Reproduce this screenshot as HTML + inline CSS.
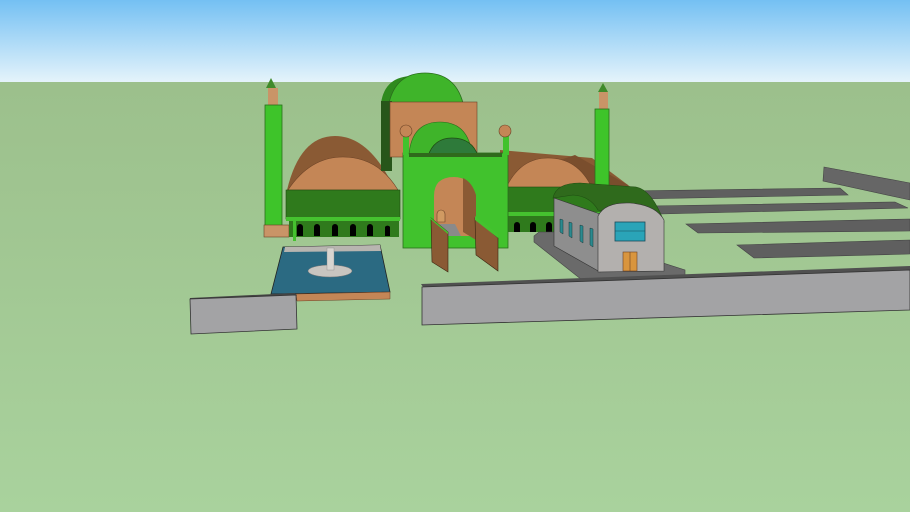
<!DOCTYPE html>
<html><head><meta charset="utf-8"><style>
html,body{margin:0;padding:0;width:910px;height:512px;overflow:hidden}
svg{display:block}
</style></head><body>
<svg width="910" height="512" viewBox="0 0 910 512" xmlns="http://www.w3.org/2000/svg">
<defs>
<linearGradient id="sky" x1="0" y1="0" x2="0" y2="1"><stop offset="0" stop-color="#74c0f3"/><stop offset="1" stop-color="#e6f4fb"/></linearGradient>
<linearGradient id="gr" x1="0" y1="0" x2="0" y2="1"><stop offset="0" stop-color="#9cc08c"/><stop offset="1" stop-color="#a9d29d"/></linearGradient>
</defs>
<rect x="0" y="0" width="910" height="83" fill="url(#sky)"/>
<rect x="0" y="82" width="910" height="430" fill="url(#gr)"/>

<!-- parking strips -->
<g fill="#5f5f5f" stroke="#444" stroke-width="0.6">
<polygon points="628,191 840,188 848,195 636,199"/>
<polygon points="650,206 895,202 908,208 660,214"/>
<polygon points="686,224 910,219 910,231 698,233"/>
<polygon points="737,245 910,240 910,254 754,258"/>
</g>
<polygon points="824,167 910,183 910,200 823,181" fill="#666" stroke="#444" stroke-width="0.6"/>

<!-- brown back roofs -->
<path d="M287,190 Q300,136 335,136 Q370,136 395,190 Z" fill="#8a5a34"/>
<polygon points="500,150 592,158 632,188 632,198 560,198 500,180" fill="#8a5a34"/>
<polygon points="560,160 575,155 628,185 630,198 560,198" fill="#7a4e2d"/>

<!-- left minaret -->
<polygon points="266,88 271,78 276,88" fill="#3f8a2a"/>
<rect x="268" y="88" width="10" height="18" fill="#c99467"/>
<rect x="265" y="105" width="17" height="122" fill="#3ec42a" stroke="#2a6e1c" stroke-width="0.8"/>
<rect x="264" y="225" width="25" height="12" fill="#c99467" stroke="#6b4226" stroke-width="0.6"/>

<!-- left wing -->
<path d="M288,190 Q310,157 343,157 Q378,157 398,190 Z" fill="#c48656" stroke="#6b4226" stroke-width="0.6"/>
<rect x="286" y="190" width="114" height="29" fill="#2f7a1c" stroke="#1f4d12" stroke-width="0.6"/>
<rect x="286" y="217" width="114" height="4" fill="#45c22f"/>
<rect x="289" y="221" width="110" height="16" fill="#2f7a1c"/>
<g fill="#000">
<path d="M297,236 v-9 a3,3 0 0 1 6,0 v9z"/><path d="M314,236 v-9 a3,3 0 0 1 6,0 v9z"/><path d="M332,236 v-9 a3,3 0 0 1 6,0 v9z"/><path d="M350,236 v-9 a3,3 0 0 1 6,0 v9z"/><path d="M367,236 v-9 a3,3 0 0 1 6,0 v9z"/><path d="M385,236 v-9 a3,3 0 0 1 5,0 v9z"/>
</g>
<rect x="293" y="221" width="3" height="20" fill="#45c22f"/>

<!-- right wing -->
<path d="M506,188 Q520,158 548,158 Q578,158 592,188 Z" fill="#c48656" stroke="#6b4226" stroke-width="0.6"/>
<rect x="506" y="187" width="96" height="27" fill="#2f7a1c" stroke="#1f4d12" stroke-width="0.6"/>
<rect x="506" y="212" width="96" height="4" fill="#45c22f"/>
<rect x="506" y="216" width="50" height="16" fill="#2f7a1c"/>
<g fill="#000"><path d="M514,232 v-7 a3,3 0 0 1 6,0 v7z"/><path d="M530,232 v-7 a3,3 0 0 1 6,0 v7z"/><path d="M546,232 v-7 a3,3 0 0 1 6,0 v7z"/></g>
<polygon points="600,188 630,188 630,198 600,198" fill="#c99467"/>

<!-- right minaret -->
<polygon points="598,92 603,83 608,92" fill="#3f8a2a"/>
<rect x="599" y="92" width="9" height="18" fill="#c99467"/>
<rect x="595" y="109" width="14" height="80" fill="#3ec42a" stroke="#2a6e1c" stroke-width="0.8"/>

<!-- central tower -->
<path d="M381,103 Q385,76 413,76 L420,103 Z" fill="#2f8a1e"/>
<path d="M389,103 Q396,73 425,73 Q455,73 463,103 Z" fill="#3fb42a" stroke="#2a6e1c" stroke-width="0.8"/>
<rect x="381" y="101" width="11" height="70" fill="#27561a"/>
<rect x="390" y="102" width="87" height="55" fill="#c48656" stroke="#6b4226" stroke-width="0.6"/>

<!-- portal -->
<rect x="403" y="153" width="105" height="95" fill="#41c22d" stroke="#2a6e1c" stroke-width="0.8"/>
<rect x="403" y="135" width="6" height="20" fill="#41c22d"/>
<rect x="503" y="135" width="6" height="20" fill="#41c22d"/>
<circle cx="406" cy="131" r="6" fill="#c48656" stroke="#6b4226" stroke-width="0.6"/>
<circle cx="505" cy="131" r="6" fill="#c48656" stroke="#6b4226" stroke-width="0.6"/>
<path d="M409,154 Q412,122 440,122 Q468,122 472,154 Z" fill="#3fb42a" stroke="#2a6e1c" stroke-width="0.6"/>
<path d="M428,156 Q434,138 452,138 Q472,138 478,156 Z" fill="#2e7a3a" stroke="#1f4d12" stroke-width="0.8"/>
<rect x="409" y="153" width="93" height="4" fill="#2f6a1c"/>
<path d="M434,236 V196 Q434,177 454,177 Q470,177 475,195 V236 Z" fill="#c48656"/>
<path d="M463,178 Q472,182 476,195 V240 L463,232 Z" fill="#8a5a34"/>
<path d="M437,222 v-8 a4,4 0 0 1 8,0 v8z" fill="#d09a62" stroke="#6b4226" stroke-width="0.6"/>
<polygon points="440,224 455,224 461,236 442,236" fill="#8a8a8a"/>

<!-- front walls -->
<polygon points="431,218 448,232 448,272 432,262" fill="#8a5a34" stroke="#3a2410" stroke-width="0.6"/>
<polygon points="429,218 431,218 448,232 448,234" fill="#45c22f"/>
<polygon points="475,218 498,238 498,271 476,255" fill="#8a5a34" stroke="#3a2410" stroke-width="0.6"/>
<polygon points="475,216 498,234 498,238 475,220" fill="#45c22f"/>

<!-- building platform -->
<polygon points="539,232 566,232 685,270 685,278 582,280 534,242 534,236" fill="#6a6a6a" stroke="#444" stroke-width="0.6"/>
<!-- side -->
<polygon points="554,198 600,214 600,272 554,246" fill="#8e8e8e" stroke="#333" stroke-width="0.6"/>
<!-- roof -->
<path d="M553,198 Q556,183 580,183 L636,187 Q652,190 664,222 L598,210 Q590,196 573,195 Z" fill="#2f6a1c" stroke="#1f4d12" stroke-width="0.6"/>
<path d="M598,272 V216 Q605,202 630,203 Q656,205 664,220 V271 Z" fill="#b3b0ae" stroke="#333" stroke-width="0.6"/>
<rect x="615" y="222" width="30" height="19" fill="#2aa4b8" stroke="#1a4a5a" stroke-width="0.8"/>
<line x1="615" y1="231" x2="645" y2="231" stroke="#1a4a5a" stroke-width="0.6"/>
<rect x="623" y="252" width="14" height="19" fill="#d9953e" stroke="#6b4226" stroke-width="0.6"/>
<line x1="630" y1="252" x2="630" y2="271" stroke="#6b4226" stroke-width="0.6"/>
<g fill="#2a8a90" stroke="#1a3a3a" stroke-width="0.5">
<polygon points="560,219 563,220 563,234 560,232"/><polygon points="569,222 572,223 572,238 569,236"/><polygon points="580,225 583,226 583,243 580,241"/><polygon points="590,228 593,229 593,247 590,245"/>
</g>

<!-- fountain -->
<polygon points="283,247 380,245 390,292 271,294" fill="#2b6a82" stroke="#222" stroke-width="0.8"/>
<polygon points="285,247 380,245 381,251 284,252" fill="#b8b5b0"/>
<polygon points="296,294 390,292 390,299 297,301" fill="#c48656" stroke="#6b4226" stroke-width="0.5"/>
<ellipse cx="330" cy="271" rx="22" ry="6" fill="#c8c5c0" stroke="#777" stroke-width="0.5"/>
<rect x="327" y="248" width="7" height="22" fill="#d8d5d0" stroke="#888" stroke-width="0.4"/>

<!-- left wall -->
<polygon points="190,298 295,293 297,296 190,300" fill="#444"/>
<polygon points="190,299 296,295 297,329 191,334" fill="#a3a3a5" stroke="#333" stroke-width="0.8"/>

<!-- right long wall -->
<polygon points="421,284 910,266 910,270 423,287" fill="#505050"/>
<polygon points="422,287 910,270 910,310 422,325" fill="#a3a3a5" stroke="#333" stroke-width="0.8"/>
</svg>
</body></html>
